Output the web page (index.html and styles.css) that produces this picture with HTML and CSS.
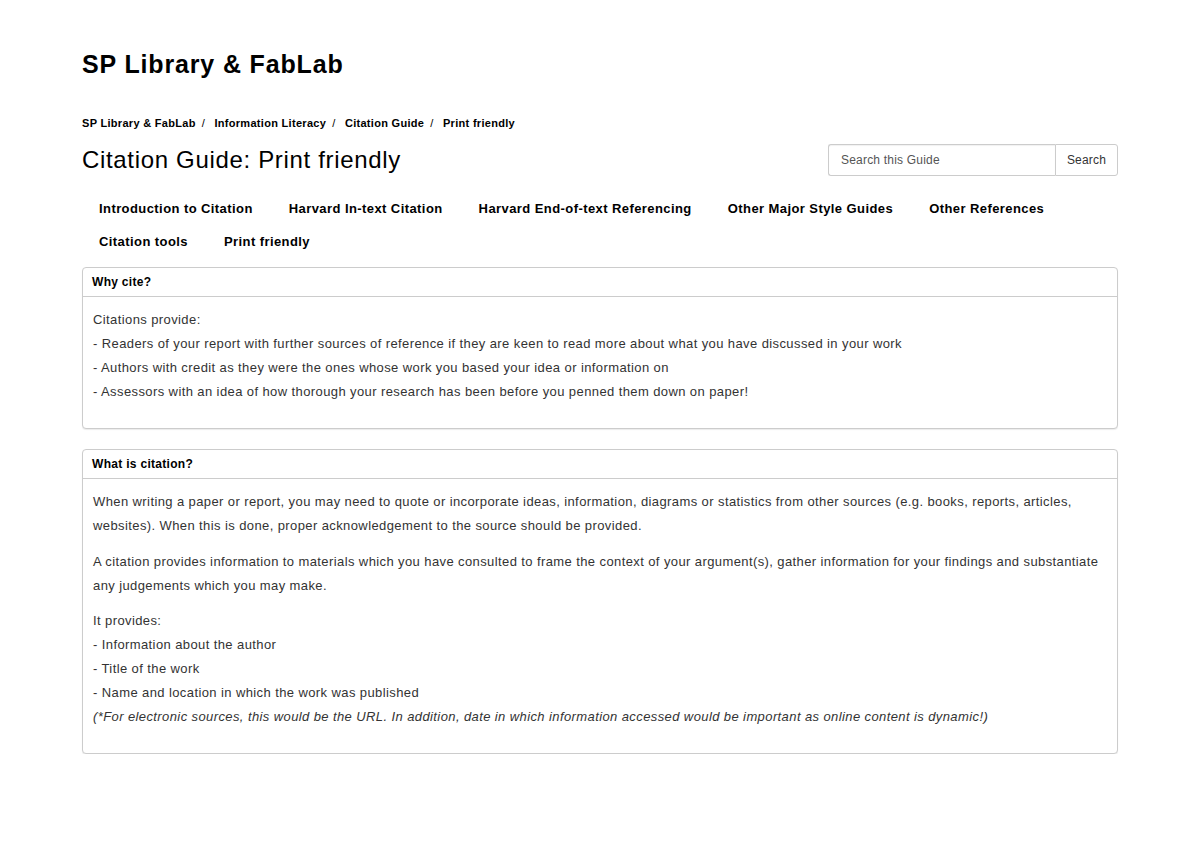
FILE: index.html
```html
<!DOCTYPE html>
<html lang="en">
<head>
<meta charset="utf-8">
<title>Citation Guide: Print friendly</title>
<link rel="stylesheet" href="styles.css">
</head>
<body>
<div class="page">
  <h1 class="site-title">SP Library &amp; FabLab</h1>
  <nav class="breadcrumb">
    <span>SP Library &amp; FabLab</span><span class="sep">/</span>
    <span>Information Literacy</span><span class="sep">/</span>
    <span>Citation Guide</span><span class="sep">/</span>
    <span>Print friendly</span>
  </nav>
  <div class="title-row">
    <h2 class="guide-title">Citation Guide: Print friendly</h2>
    <form class="search">
      <input class="search-input" type="text" placeholder="Search this Guide">
      <button class="search-btn" type="button">Search</button>
    </form>
  </div>
  <ul class="tabs">
    <li><a>Introduction to Citation</a></li>
    <li><a>Harvard In-text Citation</a></li>
    <li><a>Harvard End-of-text Referencing</a></li>
    <li><a>Other Major Style Guides</a></li>
    <li><a>Other References</a></li>
    <li><a>Citation tools</a></li>
    <li><a>Print friendly</a></li>
  </ul>

  <section class="panel">
    <div class="panel-heading">Why cite?</div>
    <div class="panel-body">
      <p>Citations provide:<br>
      - Readers of your report with further sources of reference if they are keen to read more about what you have discussed in your work<br>
      - Authors with credit as they were the ones whose work you based your idea or information on<br>
      - Assessors with an idea of how thorough your research has been before you penned them down on paper!</p>
    </div>
  </section>

  <section class="panel">
    <div class="panel-heading">What is citation?</div>
    <div class="panel-body">
      <p>When writing a paper or report, you may need to quote or incorporate ideas, information, diagrams or statistics from other sources (e.g. books, reports, articles, websites). When this is done, proper acknowledgement to the source should be provided.</p>
      <p>A citation provides information to materials which you have consulted to frame the context of your argument(s), gather information for your findings and substantiate any judgements which you may make.</p>
      <p>It provides:<br>
      - Information about the author<br>
      - Title of the work<br>
      - Name and location in which the work was published<br>
      <em>(*For electronic sources, this would be the URL. In addition, date in which information accessed would be important as online content is dynamic!)</em></p>
    </div>
  </section>
</div>
</body>
</html>
```

FILE: styles.css
```css
* { box-sizing: border-box; }
html, body { margin: 0; padding: 0; background: #fff; }
body {
  font-family: "Liberation Sans", Arial, sans-serif;
  color: #333;
  font-size: 13px;
}
.page {
  width: 1036px;
  margin: 0 auto;
}
.site-title {
  margin: 0;
  padding-top: 50px;
  font-size: 25px;
  line-height: 28px;
  font-weight: bold;
  letter-spacing: 0.85px;
  color: #000;
}
.breadcrumb {
  margin-top: 37px;
  font-size: 11px;
  line-height: 16px;
  font-weight: bold;
  letter-spacing: 0.3px;
  color: #000;
}
.breadcrumb .sep { margin: 0 6px 0 6px; font-weight: normal; }
.title-row {
  margin-top: 13px;
  display: flex;
  align-items: center;
  justify-content: space-between;
  height: 32px;
}
.guide-title {
  margin: 0;
  font-size: 24px;
  font-weight: normal;
  line-height: 28px;
  letter-spacing: 0.67px;
  color: #000;
}
.search {
  display: flex;
  width: 290px;
  height: 32px;
  margin: 0;
}
.search-input {
  flex: 1;
  min-width: 0;
  height: 32px;
  margin: 0;
  border: 1px solid #ccc;
  border-right: none;
  border-radius: 3px 0 0 3px;
  padding: 0 12px;
  font-family: "Liberation Sans", Arial, sans-serif;
  font-size: 12px;
  letter-spacing: 0.2px;
  color: #555;
  box-shadow: inset 0 1px 1px rgba(0,0,0,0.06);
}
.search-input::placeholder { color: #555; opacity: 1; }
.search-btn {
  width: 63px;
  height: 32px;
  margin: 0;
  border: 1px solid #ccc;
  border-radius: 0 3px 3px 0;
  background: #fff;
  font-family: "Liberation Sans", Arial, sans-serif;
  font-size: 12px;
  letter-spacing: 0.2px;
  color: #333;
  padding: 0;
}
.tabs {
  list-style: none;
  margin: 15px 0 0 0;
  padding: 0;
  display: flex;
  flex-wrap: wrap;
}
.tabs li { margin-right: 2px; }
.tabs a {
  display: block;
  padding: 8px 17px 6px;
  line-height: 19px;
  font-size: 13px;
  font-weight: bold;
  letter-spacing: 0.42px;
  color: #000;
}
.panel {
  margin-top: 10px;
  border: 1px solid #ccc;
  border-radius: 4px;
  box-shadow: 0 1px 1px rgba(0,0,0,0.08);
  background: #fff;
}
.panel + .panel { margin-top: 20px; }
.panel-heading {
  height: 29px;
  padding: 0 9px;
  line-height: 29px;
  border-bottom: 1px solid #ccc;
  font-size: 12px;
  font-weight: bold;
  letter-spacing: 0.3px;
  color: #000;
}
.panel-body {
  padding: 11px 10px 12.5px 10px;
}
.panel-body p {
  margin: 0 0 11.5px 0;
  line-height: 24px;
  font-size: 13px;
  letter-spacing: 0.4px;
  color: #333;
}
```
